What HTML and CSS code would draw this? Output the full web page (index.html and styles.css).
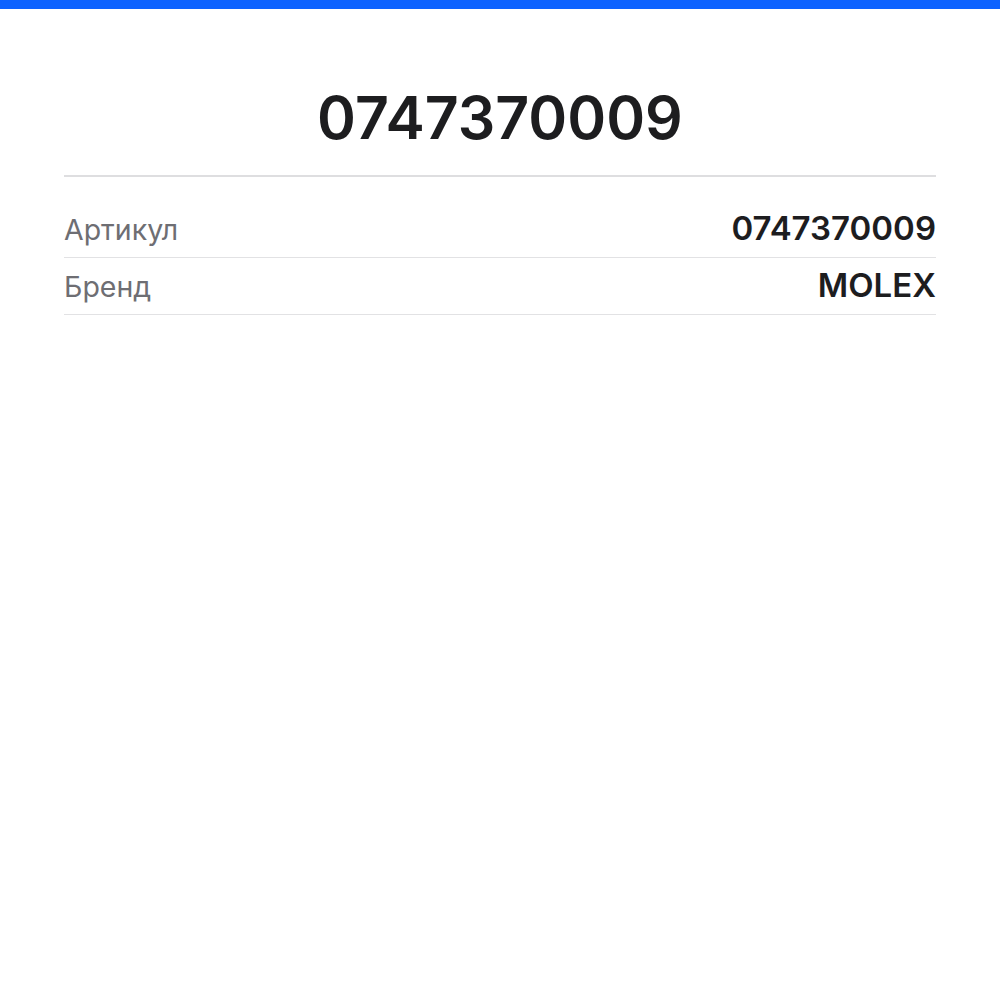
FILE: index.html
```html
<!DOCTYPE html>
<html lang="ru">
<head>
    <meta charset="UTF-8">
    <meta name="viewport" content="width=device-width, initial-scale=1.0">
    <title>0747370009</title>
    <link rel="stylesheet" href="styles.css">
</head>
<body>

<div class="top-bar"></div>

<div class="product">
    <h1 class="product-title">0747370009</h1>

    <div class="specs">
        <div class="spec-row">
            <span class="spec-label">Артикул</span>
            <span class="spec-value">0747370009</span>
        </div>
        <div class="spec-row">
            <span class="spec-label">Бренд</span>
            <span class="spec-value">MOLEX</span>
        </div>
    </div>
</div>

</body>
</html>
```

FILE: styles.css
```css
body {
    font-family: Inter, "Noto Sans", sans-serif;
    margin: 0;
    padding: 0;
    background-color: white;
    color: #1d1d1f;
}

.top-bar {
    height: 9px;
    background-color: #0d63ff;
}

.product {
    padding: 0 64px;
}

.product-title {
    margin: 0;
    padding: 73px 0 21px;
    font-size: 59px;
    font-weight: 600;
    line-height: 72px;
    text-align: center;
    border-bottom: 2px solid #dedee0;
}

.specs {
    padding-top: 24px;
}

.spec-row {
    display: flex;
    justify-content: space-between;
    align-items: baseline;
    height: 56px;
    border-bottom: 1px solid #e2e2e4;
}

.spec-label {
    font-size: 28.5px;
    color: #6e6e73;
    line-height: 55px;
}

.spec-value {
    font-size: 33px;
    font-weight: 600;
    line-height: 55px;
}
```
